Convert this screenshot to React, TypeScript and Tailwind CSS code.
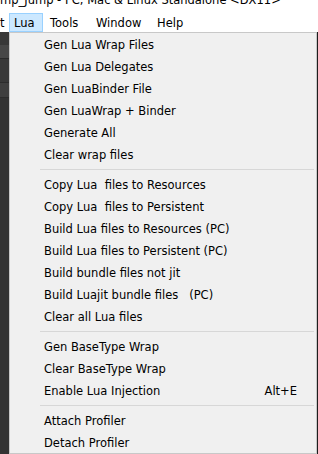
import React from 'react';

type Item = { label: string; shortcut?: string } | 'sep';

const items: Item[] = [
    { label: 'Gen Lua Wrap Files' },
    { label: 'Gen Lua Delegates' },
    { label: 'Gen LuaBinder File' },
    { label: 'Gen LuaWrap + Binder' },
    { label: 'Generate All' },
    { label: 'Clear wrap files' },
    'sep',
    { label: 'Copy Lua  files to Resources' },
    { label: 'Copy Lua  files to Persistent' },
    { label: 'Build Lua files to Resources (PC)' },
    { label: 'Build Lua files to Persistent (PC)' },
    { label: 'Build bundle files not jit' },
    { label: 'Build Luajit bundle files   (PC)' },
    { label: 'Clear all Lua files' },
    'sep',
    { label: 'Gen BaseType Wrap' },
    { label: 'Clear BaseType Wrap' },
    { label: 'Enable Lua Injection', shortcut: 'Alt+E' },
    'sep',
    { label: 'Attach Profiler' },
    { label: 'Detach Profiler' },
];

const App: React.FC = () => {
    return (
        <div
            className="w-[318px] h-[454px] overflow-hidden bg-white text-black text-[11.5px]"
            style={{ fontFamily: '"DejaVu Sans", "Noto Sans", sans-serif' }}
        >
            {/* Title bar (clipped at the top) */}
            <div className="h-[12px] overflow-hidden">
                <div className="-mt-[8px] leading-[16px] whitespace-pre">mp_Jump - PC, Mac &amp; Linux Standalone &lt;DX11&gt;</div>
            </div>

            {/* Menu bar */}
            <div className="h-[20px] flex items-start pt-[1px] whitespace-pre">
                <span className="w-[9px] pt-[2px] leading-[16px]">t</span>
                <span className="w-[34px] h-[19px] pt-[2px] leading-[15px] pl-[4px] bg-[#cce8ff] border border-[#99d1ff]">Lua</span>
                <span className="ml-[7px] w-[46px] pt-[2px] leading-[16px]">Tools</span>
                <span className="w-[61px] pt-[2px] leading-[16px]">Window</span>
                <span className="pt-[2px] leading-[16px]">Help</span>
            </div>

            {/* Body */}
            <div className="flex h-[422px] bg-[#383838]">
                {/* Dark editor strip on the left */}
                <div className="w-[9px] flex flex-col">
                    <div className="h-[13px]" />
                    <div className="h-[14px] bg-[#474747] border-b border-[#2a2a2a]" />
                    <div className="h-[23px]" />
                    <div className="h-[16px] bg-[#3f3f3f] border-y border-[#2c2c2c]" />
                    <div className="flex-1 bg-[#333333]" />
                </div>

                {/* Dropdown */}
                <div className="w-[308px] bg-[#f0f0f0] border border-[#c8c8c8] pt-[1px] flex flex-col">
                    {items.map((it, i) =>
                        it === 'sep' ? (
                            <div key={i} className="h-[8px] flex items-center pl-[30px] pr-[2px]">
                                <div className="h-[1px] w-full bg-[#d7d7d7]" />
                            </div>
                        ) : (
                            <div key={i} className="h-[22px] flex items-center pt-[2px] pl-[34px] pr-[19px] whitespace-pre">
                                <span className="flex-1">{it.label}</span>
                                {it.shortcut && <span>{it.shortcut}</span>}
                            </div>
                        )
                    )}
                </div>
                <div className="w-[1px] bg-[#1e1e1e]" />
            </div>
        </div>
    );
};

export default App;
